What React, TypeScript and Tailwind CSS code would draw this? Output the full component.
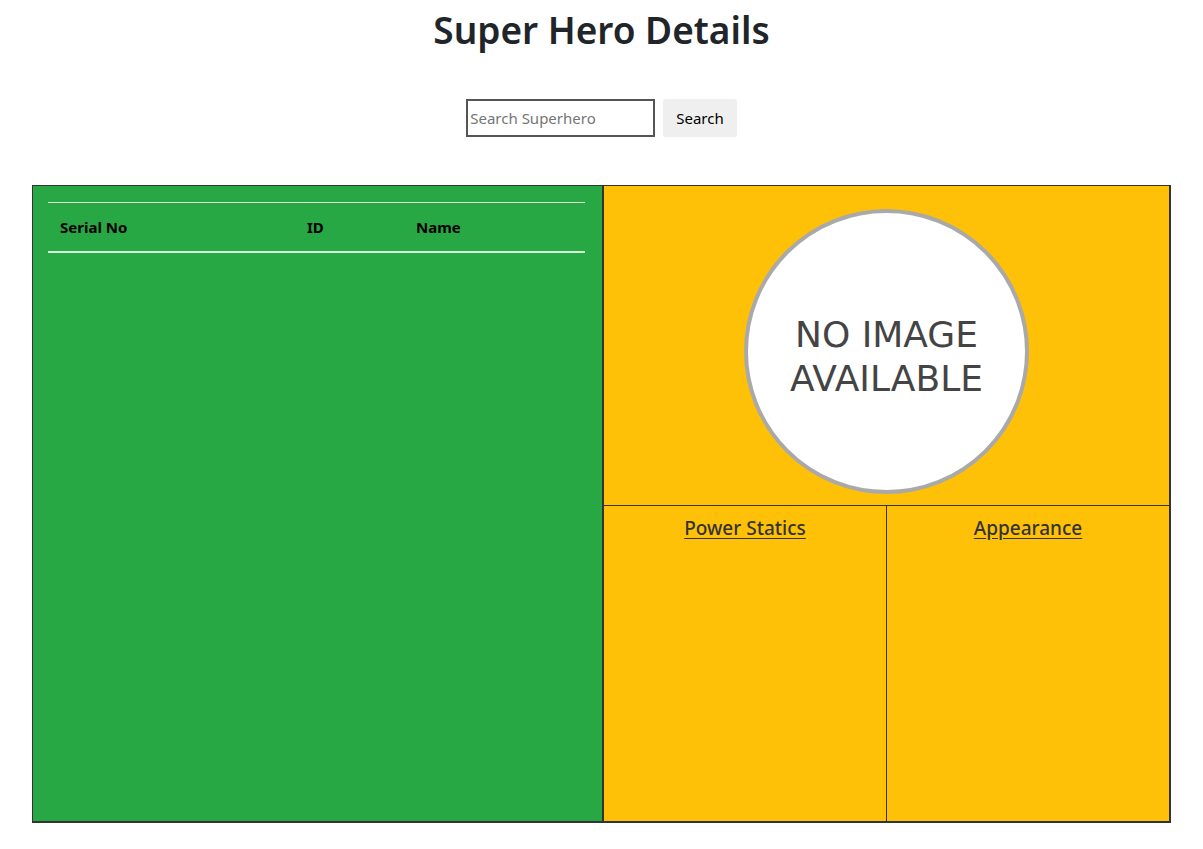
import React, { useState } from 'react';

const columns = [
    { label: 'Serial No', width: 'w-[247px]' },
    { label: 'ID', width: 'w-[109px]' },
    { label: 'Name', width: '' },
];

const App: React.FC = () => {
    const [query, setQuery] = useState('');

    return (
        <div className="min-h-[849px] bg-white font-['Noto_Sans',sans-serif] text-[#212529]">
            <h1 className="pt-[6px] text-center text-[37px] font-semibold leading-[48px]">
                Super Hero Details
            </h1>

            <div className="mt-[45px] flex justify-center gap-2">
                <input
                    value={query}
                    onChange={e => setQuery(e.target.value)}
                    placeholder="Search Superhero"
                    className="h-[38px] w-[189px] border-2 border-[#555] px-[2px] text-[15px] text-black placeholder:text-[#757575] outline-none"
                />
                <button className="h-[38px] rounded-[3px] bg-[#efefef] px-[13px] text-[15px] text-black">
                    Search
                </button>
            </div>

            <div className="mx-[32px] mt-[48px] flex h-[638px] w-[1139px] border-b-2 border-[#333]">
                {/* left: hero list */}
                <div className="w-[570px] border-l border-t border-[#333] bg-[#28a745] px-[15px] pt-[16px]">
                    <div className="mr-[2px] border-t border-[#d8eed8] border-b-2 border-b-[#d6f5d6]">
                        <div className="flex h-[48px] items-center text-[15px] font-bold text-black">
                            {columns.map(col => (
                                <div key={col.label} className={`${col.width} px-[12px]`}>
                                    {col.label}
                                </div>
                            ))}
                        </div>
                    </div>
                </div>

                {/* right: details */}
                <div className="flex w-[569px] flex-col border-x-2 border-t border-[#333] bg-[#ffc107]">
                    <div className="flex h-[320px] items-center justify-center border-b border-[#333] pt-[12px]">
                        <div className="flex h-[285px] w-[285px] items-center justify-center rounded-full border-[4px] border-[#a9a9a9] bg-white">
                            <p className="mt-[10px] text-center font-['DejaVu_Sans',sans-serif] text-[36px] leading-[44px] text-[#444]">
                                NO IMAGE
                                <br />
                                AVAILABLE
                            </p>
                        </div>
                    </div>
                    <div className="flex flex-1">
                        <div className="flex-1 border-r border-[#333] pt-[8px] text-center">
                            <h3 className="text-[19px] font-medium text-[#333] underline underline-offset-[3px]">Power Statics</h3>
                        </div>
                        <div className="flex-1 pt-[8px] text-center">
                            <h3 className="text-[19px] font-medium text-[#333] underline underline-offset-[3px]">Appearance</h3>
                        </div>
                    </div>
                </div>
            </div>
        </div>
    );
};

export default App;
